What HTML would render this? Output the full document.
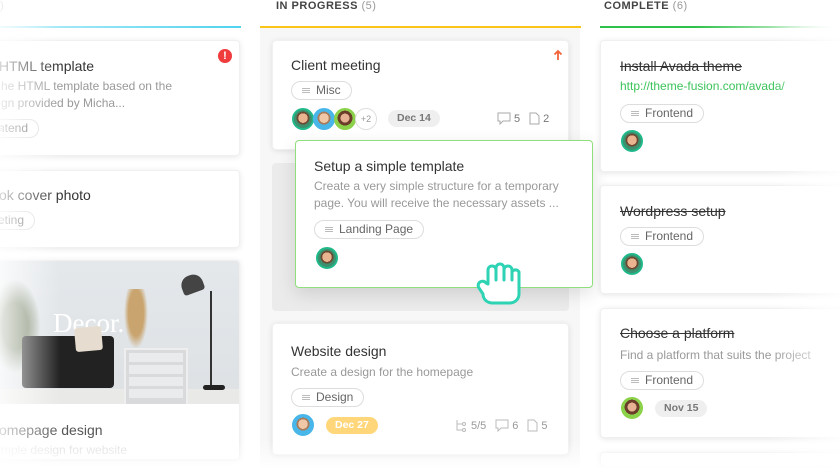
<!DOCTYPE html>
<html><head><meta charset="utf-8"><style>
*{box-sizing:border-box;margin:0;padding:0}
html,body{width:840px;height:468px;overflow:hidden}
body{background:#fff;font-family:"Liberation Sans",sans-serif;position:relative;color:#333}
.abs{position:absolute}
.card{position:absolute;background:#fff;border-radius:4px;box-shadow:0 1px 6px rgba(0,0,0,.10);border:1px solid #f0f0f0}
.t{position:absolute;font-size:14px;color:#333;white-space:nowrap}
.d{position:absolute;font-size:12px;color:#999;white-space:nowrap;line-height:17px}
.tag{position:absolute;height:19px;border:1px solid #ddd;border-radius:10px;font-size:12px;color:#666;line-height:17px;padding:0 10px 0 24px;white-space:nowrap}
.tag:before{content:"";position:absolute;left:10px;top:6px;width:8px;height:1px;background:#bbb;box-shadow:0 2px 0 #bbb,0 4px 0 #bbb}
.av{position:absolute;width:22px;height:22px;border-radius:50%;border:2px solid #20b98a;background:radial-gradient(circle at 50% 45%,#e9b48f 0 35%,#6b4a33 36% 48%,#3d8f6e 49%)}
.pill{position:absolute;height:17px;border-radius:9px;background:#efefef;font-size:10.5px;font-weight:bold;color:#777;line-height:17px;padding:0 9px;white-space:nowrap}
.hd{position:absolute;top:0;font-size:11px;letter-spacing:.5px;font-weight:bold;color:#444}
.hd span{color:#999;font-weight:normal}
.meta{position:absolute;font-size:11px;color:#777;white-space:nowrap;display:flex;align-items:center;gap:3px}
.meta svg{margin-left:6px}
.s{text-decoration:line-through}
#wrap{position:absolute;left:0;top:0;width:840px;height:468px;overflow:hidden}
</style></head><body><div id="wrap">

<div class="abs" style="left:260px;top:28px;width:320px;height:440px;background:#f7f7f7"></div>

<div class="hd" style="left:0;color:#aaa;font-weight:normal">)</div>
<div class="hd" style="left:276px">IN PROGRESS <span>(5)</span></div>
<div class="hd" style="left:604px">COMPLETE <span>(6)</span></div>
<div class="abs" style="left:0;top:26px;width:241px;height:2px;background:linear-gradient(90deg,#bdeffa,#4fd3ef)"></div>
<div class="abs" style="left:260px;top:26px;width:321px;height:2px;background:#f9c617"></div>
<div class="abs" style="left:600px;top:26px;width:240px;height:2px;background:linear-gradient(90deg,#2fc24a 40%,#fff)"></div>

<div class="card" style="left:-6px;top:40px;width:246px;height:116px">
  <div class="t" style="left:0;top:17px">&nbsp;HTML template</div>
  <div class="d" style="left:6px;top:37px">he HTML template based on the<br>gn provided by Micha...</div>
  <div class="tag" style="left:-10px;top:78px;padding-left:12px">ntend</div>
  <div class="abs" style="left:223px;top:8px;width:14px;height:14px;border-radius:50%;background:#f03c3c;color:#fff;font-size:11px;font-weight:bold;text-align:center;line-height:14px">!</div>
</div>
<div class="card" style="left:-6px;top:170px;width:246px;height:78px">
  <div class="t" style="left:4px;top:16px">ok cover photo</div>
  <div class="tag" style="left:-10px;top:40px;padding-left:12px">eting</div>
</div>
<div class="card" style="left:-6px;top:260px;width:246px;height:200px;overflow:hidden">
  <div class="abs" style="left:0;top:0;width:246px;height:143px;background:linear-gradient(#e4e8eb,#dde1e4);overflow:hidden">
    <div class="abs" style="left:0;top:128px;width:246px;height:15px;background:#e9e9e7"></div>
    <div class="abs" style="left:0;top:10px;width:50px;height:110px;background:radial-gradient(ellipse at 40% 50%,#7d8a6f 0 30%,transparent 60%)"></div>
    <div class="abs" style="left:58px;top:47px;font-family:'Liberation Serif',serif;font-size:27px;color:#fff">Decor.</div>
    <div class="abs" style="left:27px;top:75px;width:92px;height:52px;background:#222;border-radius:4px"></div>
    <div class="abs" style="left:80px;top:66px;width:27px;height:24px;background:#e6ddd0;border-radius:3px;transform:rotate(-5deg)"></div>
    <div class="abs" style="left:129px;top:28px;width:24px;height:60px;background:radial-gradient(ellipse at 50% 40%,#c9a46e 0 45%,transparent 70%)"></div>
    <div class="abs" style="left:129px;top:87px;width:64px;height:66px;background:#d8dadb;border:2px solid #eee"></div>
    <div class="abs" style="left:134px;top:92px;width:54px;height:9px;background:#e9ebec;box-shadow:0 12px 0 #e9ebec,0 24px 0 #e9ebec,0 36px 0 #e9ebec"></div>
    <div class="abs" style="left:215px;top:30px;width:2px;height:98px;background:#333"></div>
    <div class="abs" style="left:186px;top:14px;width:22px;height:18px;background:#444;border-radius:10px 10px 3px 3px;transform:rotate(-20deg)"></div>
    <div class="abs" style="left:208px;top:124px;width:22px;height:5px;background:#222;border-radius:3px"></div>
  </div>
  <div class="t" style="left:4px;top:161px;color:#555">omepage design</div>
  <div class="d" style="left:6px;top:181px;color:#ddd">mple design for website</div>
</div>

<div class="card" style="left:272px;top:40px;width:297px;height:110px">
  <div class="t" style="left:18px;top:16px">Client meeting</div>
  <svg class="abs" style="left:280px;top:8px" width="10" height="12" viewBox="0 0 10 12"><path d="M5 11V2M1.5 5.5L5 2l3.5 3.5" fill="none" stroke="#f2633a" stroke-width="1.8"/></svg>
  <div class="tag" style="left:18px;top:40px">Misc</div>
  <div class="av" style="left:19px;top:67px"></div>
  <div class="av" style="left:40px;top:67px;border-color:#49b6ea;background:radial-gradient(circle at 50% 45%,#f0c8a8 0 35%,#a67b5b 36% 48%,#49b6ea 49%)"></div>
  <div class="av" style="left:61px;top:67px;border-color:#8bd24a;background:radial-gradient(circle at 50% 45%,#e7b293 0 33%,#6a3e28 34% 55%,#8bd24a 56%)"></div>
  <div class="abs" style="left:82px;top:67px;width:22px;height:22px;border-radius:50%;border:1px solid #ddd;background:#fff;font-size:9px;color:#999;text-align:center;line-height:20px">+2</div>
  <div class="pill" style="left:115px;top:69px">Dec 14</div>
  <div class="meta" style="left:218px;top:71px">
    <svg width="14" height="13" viewBox="0 0 14 13"><path d="M1 1h12v8H6l-3 3V9H1z" fill="none" stroke="#aaa"/></svg>5
    <svg width="11" height="13" viewBox="0 0 11 13"><path d="M1 1h6l3 3v8H1z" fill="none" stroke="#aaa"/></svg>2
  </div>
</div>
<div class="abs" style="left:272px;top:163px;width:297px;height:148px;background:#ebebeb;border-radius:4px"></div>
<div class="abs" style="left:295px;top:140px;width:298px;height:148px;background:#fff;border:1.5px solid #8fe07c;border-radius:4px;box-shadow:0 6px 18px rgba(0,0,0,.12)">
  <div class="t" style="left:18px;top:17px">Setup a simple template</div>
  <div class="d" style="left:18px;top:37px">Create a very simple structure for a temporary<br>page. You will receive the necessary assets ...</div>
  <div class="tag" style="left:18px;top:79px">Landing Page</div>
  <div class="av" style="left:20px;top:106px"></div>
</div>
<div class="card" style="left:272px;top:323px;width:297px;height:132px">
  <div class="t" style="left:18px;top:19px">Website design</div>
  <div class="d" style="left:18px;top:40px">Create a design for the homepage</div>
  <div class="tag" style="left:18px;top:64px">Design</div>
  <div class="av" style="left:19px;top:90px;border-color:#49b6ea;background:radial-gradient(circle at 50% 45%,#f0c8a8 0 35%,#a67b5b 36% 48%,#49b6ea 49%)"></div>
  <div class="pill" style="left:53px;top:93px;background:#ffd67a;color:#fff">Dec 27</div>
  <div class="meta" style="left:176px;top:95px;color:#999">
    <svg width="13" height="13" viewBox="0 0 13 13"><path d="M2 1v10h5M2 5h5" fill="none" stroke="#bbb"/><circle cx="9" cy="5" r="1.5" fill="none" stroke="#bbb"/><circle cx="9" cy="11" r="1.5" fill="none" stroke="#bbb"/></svg>5/5
    <svg width="14" height="13" viewBox="0 0 14 13"><path d="M1 1h12v8H6l-3 3V9H1z" fill="none" stroke="#bbb"/></svg>6
    <svg width="11" height="13" viewBox="0 0 11 13"><path d="M1 1h6l3 3v8H1z" fill="none" stroke="#bbb"/></svg>5
  </div>
</div>

<svg class="abs" style="left:474px;top:260px" width="50" height="46" viewBox="0 0 50 46">
<path d="M14 24 V10 a4 4 0 0 1 8 0 V8 a4 4 0 0 1 8 0 V10 a4 4 0 0 1 8 0 V12 a4 4 0 0 1 7 0 V34 a9 9 0 0 1 -9 9 H18 a9 9 0 0 1 -9 -9 L5 28 a4 4 0 0 1 7 -5 Z" fill="#fff" stroke="#2ed3b4" stroke-width="3" stroke-linejoin="round"/>
<path d="M22 10 V20 M30 10 V20 M38 12 V20" stroke="#2ed3b4" stroke-width="3" stroke-linecap="round"/>
</svg>

<div class="card" style="left:600px;top:40px;width:250px;height:132px">
  <div class="t s" style="left:19px;top:17px">Install Avada theme</div>
  <div class="d" style="left:19px;top:37px;color:#3cc35a">http://theme-fusion.com/avada/</div>
  <div class="tag" style="left:19px;top:63px">Frontend</div>
  <div class="av" style="left:20px;top:89px"></div>
</div>
<div class="card" style="left:600px;top:185px;width:250px;height:109px">
  <div class="t s" style="left:19px;top:17px">Wordpress setup</div>
  <div class="tag" style="left:19px;top:41px">Frontend</div>
  <div class="av" style="left:20px;top:67px"></div>
</div>
<div class="card" style="left:600px;top:308px;width:250px;height:130px">
  <div class="t s" style="left:19px;top:16px">Choose a platform</div>
  <div class="d" style="left:19px;top:38px">Find a platform that suits the project</div>
  <div class="tag" style="left:19px;top:62px">Frontend</div>
  <div class="av" style="left:20px;top:88px;border-color:#8bd24a;background:radial-gradient(circle at 50% 45%,#e7b293 0 33%,#6a3e28 34% 55%,#8bd24a 56%)"></div>
  <div class="pill" style="left:54px;top:91px">Nov 15</div>
</div>
<div class="card" style="left:600px;top:452px;width:250px;height:14px;border-bottom:none"></div>

<div class="abs" style="left:0;top:0;width:60px;height:468px;background:linear-gradient(90deg,rgba(255,255,255,.8),rgba(255,255,255,0))"></div>
<div class="abs" style="left:770px;top:0;width:70px;height:468px;background:linear-gradient(270deg,rgba(255,255,255,.9),rgba(255,255,255,0))"></div>
<div class="abs" style="left:0;top:440px;width:840px;height:28px;background:linear-gradient(rgba(255,255,255,0),rgba(255,255,255,.9))"></div>
</div></body></html>
